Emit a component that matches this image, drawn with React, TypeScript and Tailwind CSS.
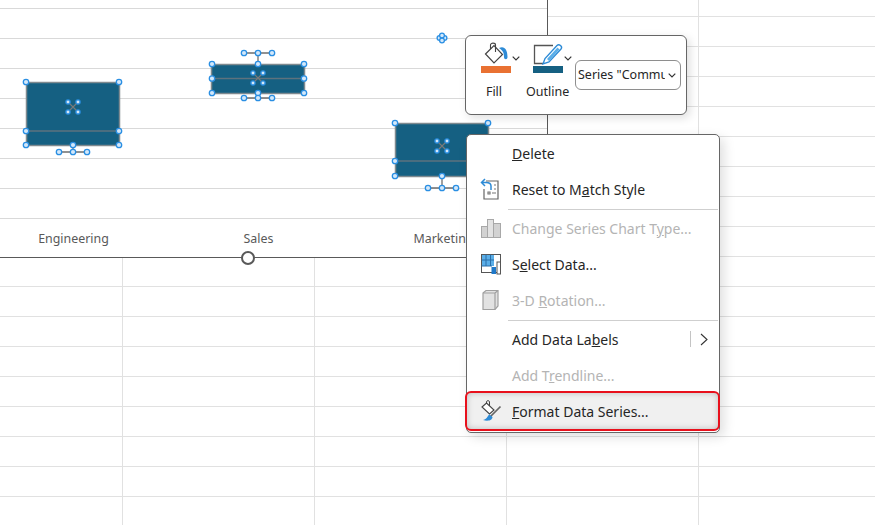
import React from "react";

const H = ({ x, y, r = 2.7 }: { x: number; y: number; r?: number }) => (
  <circle cx={x} cy={y} r={r} fill="#d3e8fa" stroke="#2a8fe3" strokeWidth={1.3} />
);

const Cluster = ({ x, y }: { x: number; y: number }) => (
  <g>
    <path d={`M${x - 4} ${y - 4}L${x + 4} ${y + 4}M${x + 4} ${y - 4}L${x - 4} ${y + 4}`} stroke="#7a7a7a" strokeWidth={1.1} />
    <H x={x - 5} y={y - 5} r={2.1} />
    <H x={x + 5} y={y - 5} r={2.1} />
    <H x={x - 5} y={y + 5} r={2.1} />
    <H x={x + 5} y={y + 5} r={2.1} />
  </g>
);

function Series() {
  return (
    <svg className="absolute left-0 top-0" width={547} height={257} viewBox="0 0 547 257">
      <rect x={26.5} y={82.5} width={93} height={63} fill="#156082" stroke="#7f8a90" strokeWidth={1.5} />
      <path d="M26 131H119" stroke="#5d727e" strokeWidth={1.5} />
      <path d="M73 145V152M59 152H87" stroke="#6e6e6e" strokeWidth={1.3} />
      <Cluster x={73} y={107} />
      {[[26, 82], [119, 82], [26, 131], [119, 131], [26, 145], [119, 145], [73, 145], [59, 152], [73, 152], [87, 152]].map(([x, y], i) => (
        <H key={i} x={x} y={y} />
      ))}

      <rect x={211.5} y={64.5} width={93} height={29} fill="#156082" stroke="#7f8a90" strokeWidth={1.5} />
      <path d="M211 78.5H304" stroke="#5d727e" strokeWidth={1.5} />
      <path d="M258 53V64M244 53H272M258 93V98M244 98H272" stroke="#6e6e6e" strokeWidth={1.3} />
      <Cluster x={258} y={78} />
      {[[212, 64], [258, 64], [304, 64], [212, 78.5], [304, 78.5], [212, 93], [258, 93], [304, 93], [244, 53], [258, 53], [272, 53], [244, 98], [258, 98], [272, 98]].map(([x, y], i) => (
        <H key={i} x={x} y={y} />
      ))}

      <rect x={395.5} y={123.5} width={93} height={53} fill="#156082" stroke="#7f8a90" strokeWidth={1.5} />
      <path d="M395 161H489" stroke="#5d727e" strokeWidth={1.5} />
      <path d="M442 176V188M428 188H456" stroke="#6e6e6e" strokeWidth={1.3} />
      <Cluster x={442} y={146} />
      {[[395, 123], [488, 123], [395, 161], [395, 176], [442, 176], [428, 188], [442, 188], [456, 188]].map(([x, y], i) => (
        <H key={i} x={x} y={y} />
      ))}

      <H x={439.5} y={38} r={2.4} />
      <H x={444.5} y={38} r={2.4} />
      <H x={442} y={35.5} r={2.4} />
      <H x={442} y={40.5} r={2.4} />
    </svg>
  );
}

const Chev = ({ color = "#333" }: { color?: string }) => (
  <svg width={8} height={5} viewBox="0 0 8 5">
    <path d="M0.7 0.7L4 4L7.3 0.7" fill="none" stroke={color} strokeWidth={1.2} />
  </svg>
);

const FillIcon = () => (
  <svg width={32} height={24} viewBox="0 0 32 24">
    <path d="M4.5 12L13 3.5L21.5 12.5L13 21Z" fill="#fff" stroke="#444" strokeWidth={1.2} />
    <path d="M9.5 7V3C9.5 0.5 14.5 0.5 14.5 3V10" fill="none" stroke="#444" strokeWidth={1.1} />
    <path d="M18 6C23 3.5 26.5 7 26.5 15C26.5 18 23 18 23 15C23 11 22 8.5 18 6Z" fill="#2e8bd6" />
  </svg>
);

const OutlineIcon = () => (
  <svg width={32} height={24} viewBox="0 0 32 24">
    <path d="M10 21.5H1.5V3.5H20" fill="none" stroke="#555" strokeWidth={1.3} />
    <path d="M10 22L12 16.5L24 3.5C26 1.5 30 4.5 28 7L16 20Z" fill="#fff" stroke="#2e8bd6" strokeWidth={1.4} />
    <path d="M14 17L24.5 5.5L26.5 7.5L16 19Z" fill="#5aaee8" />
  </svg>
);

const ResetIcon = () => (
  <svg width={22} height={22} viewBox="0 0 22 22">
    <path d="M6 3H18V21H4V11" fill="#fff" stroke="#666" strokeWidth={1.2} />
    <path d="M14 7H16M14 11H16M8 14H10V16H8ZM12 15H16" stroke="#777" strokeWidth={1.2} fill="none" />
    <path d="M11 12V8C11 5 9 4.5 6 4.5H2M5 1L1.5 4.5L5 8" fill="none" stroke="#2e8bd6" strokeWidth={1.5} />
  </svg>
);

const TypeIcon = () => (
  <svg width={22} height={22} viewBox="0 0 22 22">
    <rect x={1.5} y={9.5} width={6} height={11} fill="#d2d2d2" stroke="#a8a8a8" />
    <rect x={7.5} y={2.5} width={6} height={18} fill="#e2e2e2" stroke="#a8a8a8" />
    <rect x={13.5} y={6.5} width={7} height={14} fill="#d2d2d2" stroke="#a8a8a8" />
  </svg>
);

const SelectIcon = () => (
  <svg width={22} height={22} viewBox="0 0 22 22">
    <rect x={1.5} y={1.5} width={19} height={18} fill="#fff" stroke="#555" />
    <rect x={2} y={2} width={12} height={11} fill="#5aaee8" />
    <path d="M6 1.5V13M10.5 1.5V13M1.5 7H14M1.5 13H12" stroke="#2a6fa8" strokeWidth={1} />
    <rect x={11.5} y={14} width={4.5} height={7} fill="#1f78c8" />
    <rect x={17} y={9} width={3.5} height={12} fill="#fff" stroke="#555" />
  </svg>
);

const CubeIcon = () => (
  <svg width={22} height={22} viewBox="0 0 22 22">
    <path d="M3 4L6 1.5H18V17L15 20.5H3Z" fill="#e2e2e2" stroke="#a0a0a0" strokeWidth={1.2} />
    <path d="M3 4H15V20.5M15 4L18 1.5" fill="none" stroke="#a0a0a0" strokeWidth={1.2} />
  </svg>
);

const FormatIcon = () => (
  <svg width={22} height={22} viewBox="0 0 22 22">
    <path d="M2 7L6.5 3L14 10L9.5 14Z" fill="#fff" stroke="#444" strokeWidth={1.1} />
    <path d="M6.5 3.5V1.5C6.5 0.5 9.5 0.5 9.5 1.5V6" fill="none" stroke="#444" strokeWidth={1} />
    <path d="M20.5 6.5L10 17" stroke="#666" strokeWidth={1.7} />
    <path d="M9.5 14.5C7 15.5 8 19 3 20C7.5 21.5 12.5 20.5 12.5 17Z" fill="#2e8bd6" />
  </svg>
);

const Item = ({ icon, disabled, children, right }: { icon?: React.ReactNode; disabled?: boolean; children: React.ReactNode; right?: boolean }) => (
  <div className={`flex h-[36px] items-center ${disabled ? "text-[#b4b4b4]" : "text-[#262626]"}`}>
    <div className="flex w-[45px] justify-center pl-[3px]">{icon}</div>
    <div className="flex-1 whitespace-nowrap">{children}</div>
    {right && (
      <div className="flex h-[16px] items-center border-l border-[#c4c4c4] pl-[9px] pr-[11px]">
        <svg width={8} height={13} viewBox="0 0 8 13">
          <path d="M1 1L7 6.5L1 12" fill="none" stroke="#333" strokeWidth={1.1} />
        </svg>
      </div>
    )}
  </div>
);

const Sep = () => <div className="ml-[41px] mr-px mt-[2px] h-px bg-[#cfcfcf]" />;

export default function App() {
  const chartRows = Array.from({ length: 7 });
  const sideRows = Array.from({ length: 8 });
  const lowerRows = Array.from({ length: 8 });
  const lowerCols = "grid grid-cols-[123px_192px_192px_192px_1fr]";

  return (
    <div className="relative h-[525px] w-[875px] overflow-hidden bg-white font-['Noto_Sans','Open_Sans',sans-serif]">
      <div className="flex h-[258px]">
        <div className="relative w-[548px] border-b border-r border-[#595959]">
          <div className="h-[9px] border-b border-[#d9d9d9]" />
          {chartRows.map((_, i) => (
            <div key={i} className="h-[30px] border-b border-[#d9d9d9]" />
          ))}
          <div className="-ml-[19px] grid w-[555px] grid-cols-3 pt-[11px] text-center text-[12.4px] leading-[18px] text-[#595959]">
            <span>Engineering</span>
            <span>Sales</span>
            <span>Marketing</span>
          </div>
          <Series />
        </div>
        <div className="flex-1">
          <div className="grid h-[17px] grid-cols-[151px_1fr] border-b border-[#e1e1e1]">
            <div className="border-r border-[#e1e1e1]" />
          </div>
          {sideRows.map((_, i) => (
            <div key={i} className="grid h-[30px] grid-cols-[151px_1fr] border-b border-[#e1e1e1]">
              <div className="border-r border-[#e1e1e1]" />
            </div>
          ))}
        </div>
      </div>

      <div className={`${lowerCols} h-[29px] border-b border-[#e1e1e1]`}>
        {[0, 1, 2, 3].map((c) => (
          <div key={c} className="border-r border-[#e1e1e1]" />
        ))}
      </div>
      {lowerRows.map((_, i) => (
        <div key={i} className={`${lowerCols} h-[30px] border-b border-[#e1e1e1]`}>
          {[0, 1, 2, 3].map((c) => (
            <div key={c} className="border-r border-[#e1e1e1]" />
          ))}
        </div>
      ))}

      {/* axis handle */}
      <div className="absolute left-[241px] top-[251px] size-[14px] rounded-full border-[2.5px] border-[#595959] bg-white" />

      {/* mini toolbar */}
      <div className="absolute left-[465px] top-[35px] flex h-[80px] w-[222px] rounded-[6px] border border-[#666] bg-white pl-[15px] pt-[6px] text-[12.5px] text-[#262626] shadow-[3px_3px_10px_rgba(0,0,0,0.13)]">
        <div className="flex w-[52px] flex-col">
          <div className="flex items-center">
            <FillIcon />
            <span className="-ml-[1px] mt-[8px]"><Chev /></span>
          </div>
          <div className="h-[7px] w-[30px] bg-[#e97132]" />
          <div className="-ml-[2px] mt-[10px] w-[30px] text-center leading-[17px]">Fill</div>
        </div>
        <div className="flex w-[43px] flex-col">
          <div className="flex items-center">
            <OutlineIcon />
            <span className="-ml-[1px] mt-[8px]"><Chev /></span>
          </div>
          <div className="h-[7px] w-[30px] bg-[#156082]" />
          <div className="-ml-[7px] mt-[10px] leading-[17px]">Outline</div>
        </div>
        <div className="ml-[-1px] mt-[18px] flex h-[30px] w-[106px] items-center rounded-[6px] border border-[#8e8e8e] bg-white pl-[2px] pr-[4px] text-[12.5px]">
          <span className="w-[87px] overflow-hidden whitespace-nowrap">Series "Commun</span>
          <span className="ml-[3px]"><Chev /></span>
        </div>
      </div>

      {/* context menu */}
      <div className="absolute left-[466px] top-[134px] h-[299px] w-[254px] rounded-[5px] border border-[#666] bg-white text-[14px] shadow-[4px_4px_12px_rgba(0,0,0,0.13)]">
        <Item><u>D</u>elete</Item>
        <Item icon={<ResetIcon />}>Reset to M<u>a</u>tch Style</Item>
        <Sep />
        <Item disabled icon={<TypeIcon />}>Change Series Chart T<u>y</u>pe...</Item>
        <Item icon={<SelectIcon />}>S<u>e</u>lect Data...</Item>
        <Item disabled icon={<CubeIcon />}>3-D <u>R</u>otation...</Item>
        <Sep />
        <Item right>Add Data La<u>b</u>els</Item>
        <Item disabled>Add T<u>r</u>endline...</Item>
        <div className="-ml-[2px] -mr-px -mt-[2px] rounded-[6px] border-2 border-[#e8101c] bg-[#f0f0f0] shadow-[inset_0_0_6px_rgba(0,0,0,0.22)]">
          <Item icon={<FormatIcon />}><u>F</u>ormat Data Series...</Item>
        </div>
      </div>
    </div>
  );
}
